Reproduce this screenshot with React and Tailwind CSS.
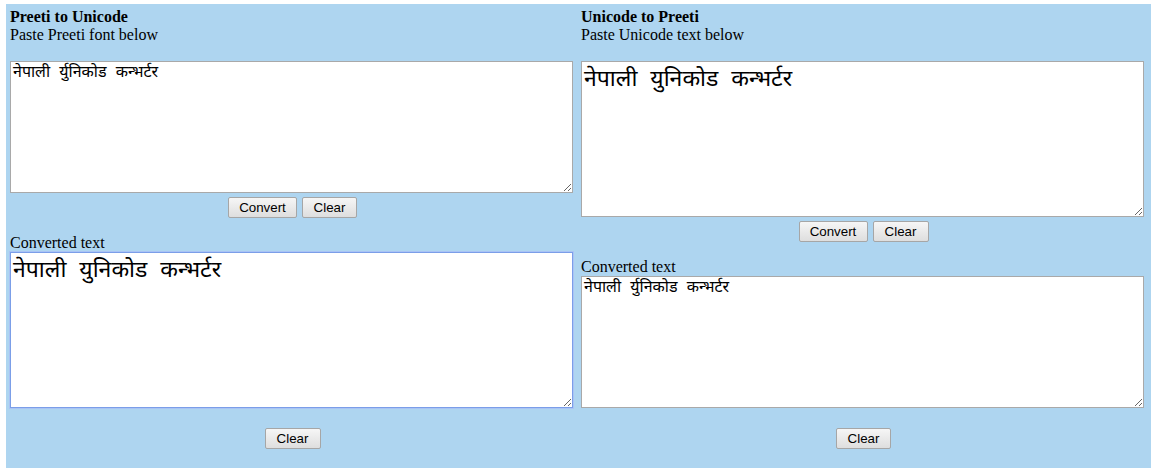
import { useState } from "react";

const serif = { fontFamily: '"Liberation Serif", "Times New Roman", serif' };

function Btn({ children, w, onClick }) {
  return (
    <button
      type="button"
      onClick={onClick}
      className={`h-[21px] ${w} rounded-[2px] border border-[#a6a6a6] bg-gradient-to-b from-[#f6f6f6] to-[#dedede] text-[13.33px] leading-[19px] text-black`}
      style={{ fontFamily: '"Liberation Sans", Arial, sans-serif' }}
    >
      {children}
    </button>
  );
}

function Box({ value, onChange, h, big, focus }) {
  return (
    <textarea
      value={value}
      onChange={(e) => onChange(e.target.value)}
      className={`block w-full ${h} resize-y bg-white px-[2px] outline-none ${
        big
          ? "pt-[2px] text-[23px] leading-[32px] [word-spacing:7px]"
          : "pt-[1px] text-[16px] leading-[22px] [word-spacing:5px]"
      } ${
        focus
          ? "border border-[#7b9ee8] shadow-[0_0_0_1px_#a9c4f5]"
          : "border border-[#a9a9a9]"
      }`}
      style={{ fontFamily: '"Noto Sans Devanagari", "Lohit Devanagari", Mangal, sans-serif' }}
    />
  );
}

export default function App() {
  const [preeti, setPreeti] = useState("नेपाली र्युनिकोड कन्भर्टर");
  const [uni, setUni] = useState("नेपाली युनिकोड कन्भर्टर");
  const [uniIn, setUniIn] = useState("नेपाली युनिकोड कन्भर्टर");
  const [preetiOut, setPreetiOut] = useState("नेपाली र्युनिकोड कन्भर्टर");

  return (
    <div className="bg-white pt-[4px] pl-[6px]" style={serif}>
      <div className="flex w-[1145px] gap-[8px] bg-[#aed5f0] pt-[4px] pr-[7px] pb-[19px] pl-[4px] text-[16px] leading-[18px] text-black">
        <div className="flex w-[563px] flex-col">
          <div className="font-bold">Preeti to Unicode</div>
          <div>Paste Preeti font below</div>
          <div className="h-[17px]" />
          <Box value={preeti} onChange={setPreeti} h="h-[132px]" />
          <div className="mt-[4px] flex justify-center gap-[5px] pl-[2px]">
            <Btn w="w-[69px]">Convert</Btn>
            <Btn w="w-[55px]" onClick={() => setPreeti("")}>Clear</Btn>
          </div>
          <div className="mt-[16px]">Converted text</div>
          <Box value={uni} onChange={setUni} h="h-[156px]" big focus />
          <div className="mt-[20px] flex justify-center pl-[2px]">
            <Btn w="w-[56px]" onClick={() => setUni("")}>Clear</Btn>
          </div>
        </div>
        <div className="flex w-[563px] flex-col">
          <div className="font-bold">Unicode to Preeti</div>
          <div>Paste Unicode text below</div>
          <div className="h-[17px]" />
          <Box value={uniIn} onChange={setUniIn} h="h-[156px]" big />
          <div className="mt-[4px] flex justify-center gap-[5px] pl-[2px]">
            <Btn w="w-[69px]">Convert</Btn>
            <Btn w="w-[56px]" onClick={() => setUniIn("")}>Clear</Btn>
          </div>
          <div className="mt-[16px]">Converted text</div>
          <Box value={preetiOut} onChange={setPreetiOut} h="h-[132px]" />
          <div className="mt-[20px] flex justify-center pl-[2px]">
            <Btn w="w-[55px]" onClick={() => setPreetiOut("")}>Clear</Btn>
          </div>
        </div>
      </div>
    </div>
  );
}
